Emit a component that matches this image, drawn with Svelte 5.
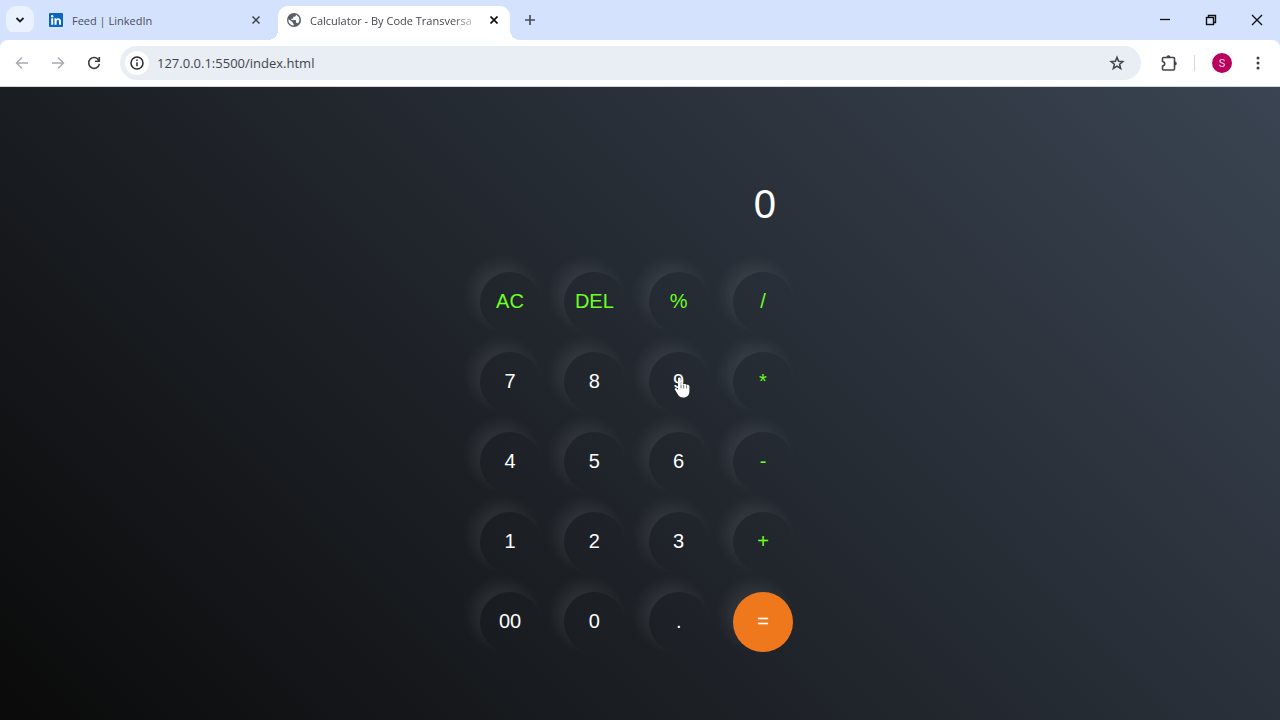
<script lang="ts">
  const keys = [
    "AC", "DEL", "%", "/",
    "7", "8", "9", "*",
    "4", "5", "6", "-",
    "1", "2", "3", "+",
    "00", "0", ".", "=",
  ];
  const operators = ["AC", "DEL", "%", "/", "*", "-", "+"];

  let display = "0";
  let expression = "";
  let address = "127.0.0.1:5500/index.html";

  function compute(source: string): string {
    const tokens = source.match(/\d*\.?\d+|[-+*/%]/g) ?? [];
    const stack: number[] = [];
    let op = "+";
    for (const token of tokens) {
      if (/^[-+*/%]$/.test(token)) {
        op = token;
        continue;
      }
      const n = parseFloat(token);
      if (op === "+") stack.push(n);
      else if (op === "-") stack.push(-n);
      else {
        const left = stack.pop() ?? 0;
        stack.push(op === "*" ? left * n : op === "/" ? left / n : left % n);
      }
    }
    return String(stack.reduce((a, b) => a + b, 0));
  }

  function press(key: string) {
    if (key === "AC") expression = "";
    else if (key === "DEL") expression = expression.slice(0, -1);
    else if (key === "=") expression = compute(expression);
    else expression += key;
    display = expression || "0";
  }
</script>

<div class="browser">
  <div class="tab-strip">
    <button class="tab-search" aria-label="Search tabs">
      <svg width="10" height="10" viewBox="0 0 10 10"><path d="M1.5 3 5 6.500 8.500 3" fill="none" stroke="#1b1e23" stroke-width="1.800" /></svg>
    </button>
    <div class="tab">
      <svg class="favicon" width="14" height="14" viewBox="0 0 14 14">
        <rect width="14" height="14" rx="1" fill="#0a66c2" />
        <path d="M2.2 5.3h2v6.5h-2zM5.5 5.3h1.9v.9c.9-1.6 4.6-1.5 4.6 1.7v3.9h-2V8.4c0-1.9-2.4-1.7-2.4 0v3.4H5.5z" fill="#fff" />
        <circle cx="3.2" cy="3.2" r="1.2" fill="#fff" />
      </svg>
      <span class="tab-title">Feed | LinkedIn</span>
      <button class="tab-close" aria-label="Close Feed tab">
        <svg width="8" height="8" viewBox="0 0 8 8"><path d="m.5.5 7 7m0-7-7 7" stroke="#3c4048" stroke-width="1.5" /></svg>
      </button>
    </div>
    <div class="tab active">
      <svg class="favicon" width="14" height="14" viewBox="0 0 14 14">
        <circle cx="7" cy="7" r="7" fill="#5b6066" />
        <path d="M1.4 6.2 5.6 9v1l1.1 1v1.5C3.2 12.3 1 9.5 1.4 6.2zM8.9 1.8v.7c0 .7-.6 1.2-1.3 1.2H6.3V5c0 .4-.3.7-.7.7H4.3V7h4c.4 0 .7.3.7.7v2h.7c.6 0 1 .3 1.2.9C13.7 7.5 12.3 3.2 8.9 1.8z" fill="#fff" />
      </svg>
      <span class="tab-title fade">Calculator - By Code Transversa</span>
      <button class="tab-close" aria-label="Close Calculator tab">
        <svg width="8" height="8" viewBox="0 0 8 8"><path d="m.5.5 7 7m0-7-7 7" stroke="#111" stroke-width="1.7" /></svg>
      </button>
    </div>
    <button class="new-tab" aria-label="New tab">
      <svg width="12" height="12" viewBox="0 0 12 12"><path d="M6 1v10M1 6h10" stroke="#454950" stroke-width="1.6" /></svg>
    </button>
    <div class="window-controls">
      <button aria-label="Minimize"><svg width="12" height="12" viewBox="0 0 12 12"><path d="M1 5.5h10" stroke="#111" stroke-width="1.3" /></svg></button>
      <button aria-label="Restore"><svg width="12" height="12" viewBox="0 0 12 12" fill="none" stroke="#111" stroke-width="1.4"><rect x="1.5" y="3.5" width="7" height="7" /><path d="M3.5 3V1.5h7v7H9" /></svg></button>
      <button aria-label="Close window"><svg width="12" height="12" viewBox="0 0 12 12"><path d="m1 1 10 10M11 1 1 11" stroke="#111" stroke-width="1.4" /></svg></button>
    </div>
  </div>

  <div class="toolbar">
    <button class="tool" aria-label="Back">
      <svg width="14" height="14" viewBox="0 0 14 14"><path d="M13 7H2m5-5.500L1.500 7 7 12.500" fill="none" stroke="#a8abb0" stroke-width="1.5" /></svg>
    </button>
    <button class="tool" aria-label="Forward">
      <svg width="14" height="14" viewBox="0 0 14 14"><path d="M1 7h11M7 1.500 12.500 7 7 12.500" fill="none" stroke="#a8abb0" stroke-width="1.5" /></svg>
    </button>
    <button class="tool" aria-label="Reload">
      <svg width="14" height="14" viewBox="0 0 14 14"><path d="M11.8 4.300A5.400 5.400 0 1 0 12.400 7.800M12.300 1v4.300H8" fill="none" stroke="#3c4046" stroke-width="1.6" /></svg>
    </button>
    <div class="omnibox">
      <button class="site-info" aria-label="Site information">
        <svg width="14" height="14" viewBox="0 0 14 14"><circle cx="7" cy="7" r="6" fill="none" stroke="#26292e" stroke-width="1.5" /><path d="M7 6.200v4M7 3.500v1.500" stroke="#26292e" stroke-width="1.5" /></svg>
      </button>
      <input class="address" type="text" aria-label="Address" bind:value={address} />
      <button class="star" aria-label="Bookmark this page">
        <svg width="16" height="16" viewBox="0 0 16 16"><path d="m8 2.200 1.600 4 4.300.300-3.300 2.800 1.100 4.200L8 11.200l-3.700 2.300 1.100-4.200-3.300-2.800 4.300-.300z" fill="none" stroke="#41454b" stroke-width="1.5" /></svg>
      </button>
    </div>
    <button class="extensions" aria-label="Extensions">
      <svg width="18" height="18" viewBox="0 0 18 18">
        <path d="M3.500 3.500h10q1 0 1 1v10.500q0 1-1 1h-10q-1 0-1-1v-3q2.200-.3 2.200-2.200T2.500 7.500v-3q0-1 1-1z" fill="none" stroke="#41454b" stroke-width="1.6" stroke-linejoin="round" />
        <path d="M6.500 3.200a2 2 0 0 1 4 0zM14.800 7.500a2 2 0 0 1 0 4z" fill="#41454b" />
      </svg>
    </button>
    <span class="divider"></span>
    <button class="avatar" aria-label="Profile">S</button>
    <button class="menu" aria-label="Menu">
      <svg width="4" height="14" viewBox="0 0 4 14" fill="#3c4046"><circle cx="2" cy="2" r="1.5" /><circle cx="2" cy="7" r="1.5" /><circle cx="2" cy="12" r="1.5" /></svg>
    </button>
  </div>

  <main class="page">
    <div class="calculator">
      <input class="display" type="text" aria-label="Result" readonly value={display} />
      <div class="keys">
        {#each keys as key}
          <button
            class="key"
            class:operator={operators.includes(key)}
            class:equal={key === "="}
            on:click={() => press(key)}
          >
            {key}
            {#if key === "9"}
              <svg class="pointer" width="18" height="22" viewBox="0 0 18 22"><path d="M4 1.500C4 .2 6.700.2 6.700 1.500V7c.8-.8 2.600-.6 2.900.5.800-.7 2.500-.4 2.800.6 1-.7 3-.2 3 1.400v4.500c0 4.200-2.300 6.500-5.900 6.500-3.500 0-4.800-1.600-6.200-4L1 12.800c-.8-1.400.8-2.200 1.800-1.200L4 13z" fill="#fff" /><path d="M7 7.500v4M9.700 8v3.500M12.500 8.500v3" stroke="#3a3d42" stroke-width=".7" /></svg>
            {/if}
          </button>
        {/each}
      </div>
    </div>
  </main>
</div>

<style>
  :global(body) {
    margin: 0;
  }

  .browser {
    min-height: 100vh;
    display: flex;
    flex-direction: column;
    font-family: "Open Sans", "Noto Sans", sans-serif;
  }

  button {
    display: flex;
    align-items: center;
    justify-content: center;
    flex: none;
    padding: 0;
    border: none;
    background: transparent;
    cursor: pointer;
  }

  input {
    box-sizing: border-box;
    min-width: 0;
    padding: 0;
    border: none;
    outline: none;
    background: transparent;
  }

  .tab-strip {
    display: flex;
    align-items: center;
    height: 40px;
    padding-left: 6px;
    background: #d5e2fd;
  }

  .tab-search {
    width: 28px;
    height: 28px;
    border-radius: 10px;
    background: #eaf2ff;
  }

  .tab {
    display: flex;
    align-items: center;
    box-sizing: border-box;
    width: 232px;
    height: 34px;
    margin-top: 6px;
    margin-left: 6px;
    padding: 0 12px 6px 9px;
    color: #4a4f5a;
    font-size: 11px;
    line-height: 16px;
  }

  .tab.active {
    position: relative;
    border-radius: 10px 10px 0 0;
    background: #fff;
    color: #45484d;
  }

  .tab.active::before,
  .tab.active::after {
    content: "";
    position: absolute;
    bottom: 0;
    width: 10px;
    height: 10px;
  }

  .tab.active::before {
    right: 100%;
    background: radial-gradient(circle at 0 0, transparent 10px, #fff 10px);
  }

  .tab.active::after {
    left: 100%;
    background: radial-gradient(circle at 100% 0, transparent 10px, #fff 10px);
  }

  .favicon {
    flex: none;
  }

  .tab-title {
    flex: 1;
    margin: 0 10px 0 9px;
    padding-top: 2px;
    white-space: nowrap;
  }

  .fade {
    mask-image: linear-gradient(to right, #000 84%, transparent);
  }

  .tab-close {
    width: 8px;
    height: 16px;
  }

  .new-tab {
    width: 28px;
    height: 28px;
    margin-left: 6px;
  }

  .window-controls {
    display: flex;
    margin-left: auto;
  }

  .window-controls button {
    width: 46px;
    height: 40px;
  }

  .toolbar {
    display: flex;
    align-items: center;
    height: 47px;
    padding: 0 10px 0 4px;
    box-sizing: border-box;
    border-bottom: 1px solid #d4d6d9;
    border-radius: 8px 8px 0 0;
    background: #fff;
    box-shadow: 0 -8px 0 #d5e2fd;
  }

  .tool {
    width: 36px;
    height: 32px;
  }

  .omnibox {
    display: flex;
    flex: 1;
    align-items: center;
    height: 34px;
    margin-left: 8px;
    padding: 0 14px 0 5px;
    border-radius: 17px;
    background: #e9edf4;
  }

  .site-info {
    width: 24px;
    height: 24px;
    border-radius: 50%;
    background: #fff;
  }

  .address {
    flex: 1;
    margin-left: 8px;
    color: #41454d;
    font-family: inherit;
    font-size: 13px;
  }

  .star {
    width: 20px;
    height: 24px;
  }

  .extensions {
    width: 24px;
    height: 24px;
    margin-left: 16px;
  }

  .divider {
    width: 1px;
    height: 16px;
    margin: 0 17px 0 13px;
    background: #cfd6e4;
  }

  .avatar {
    width: 20px;
    height: 20px;
    border-radius: 50%;
    background: #b8005c;
    color: #f6dce8;
    font-family: Roboto, sans-serif;
    font-size: 11px;
  }

  .menu {
    width: 24px;
    height: 24px;
    margin-left: 14px;
  }

  .page {
    flex: 1;
    display: flex;
    align-items: center;
    justify-content: center;
    background: linear-gradient(45deg, #0a0a0a, #3a4452);
  }

  .calculator {
    width: 320px;
    font-family: "Liberation Sans", Arial, sans-serif;
  }

  .display {
    display: block;
    width: 100%;
    height: 98px;
    margin-bottom: 18px;
    padding-right: 24px;
    color: #fff;
    font-family: inherit;
    font-size: 40px;
    text-align: right;
  }

  .keys {
    display: grid;
    grid-template-columns: repeat(4, 60px);
    justify-content: space-between;
    row-gap: 20px;
    margin-right: 7px;
  }

  .key {
    position: relative;
    width: 60px;
    height: 60px;
    border-radius: 50%;
    box-shadow: -8px -8px 15px rgba(255, 255, 255, 0.08);
    color: #fff;
    font-family: inherit;
    font-size: 20px;
  }

  .operator {
    color: #6dff22;
  }

  .equal {
    background: #f0781c;
  }

  .pointer {
    position: absolute;
    top: 25px;
    left: 25px;
  }
</style>
